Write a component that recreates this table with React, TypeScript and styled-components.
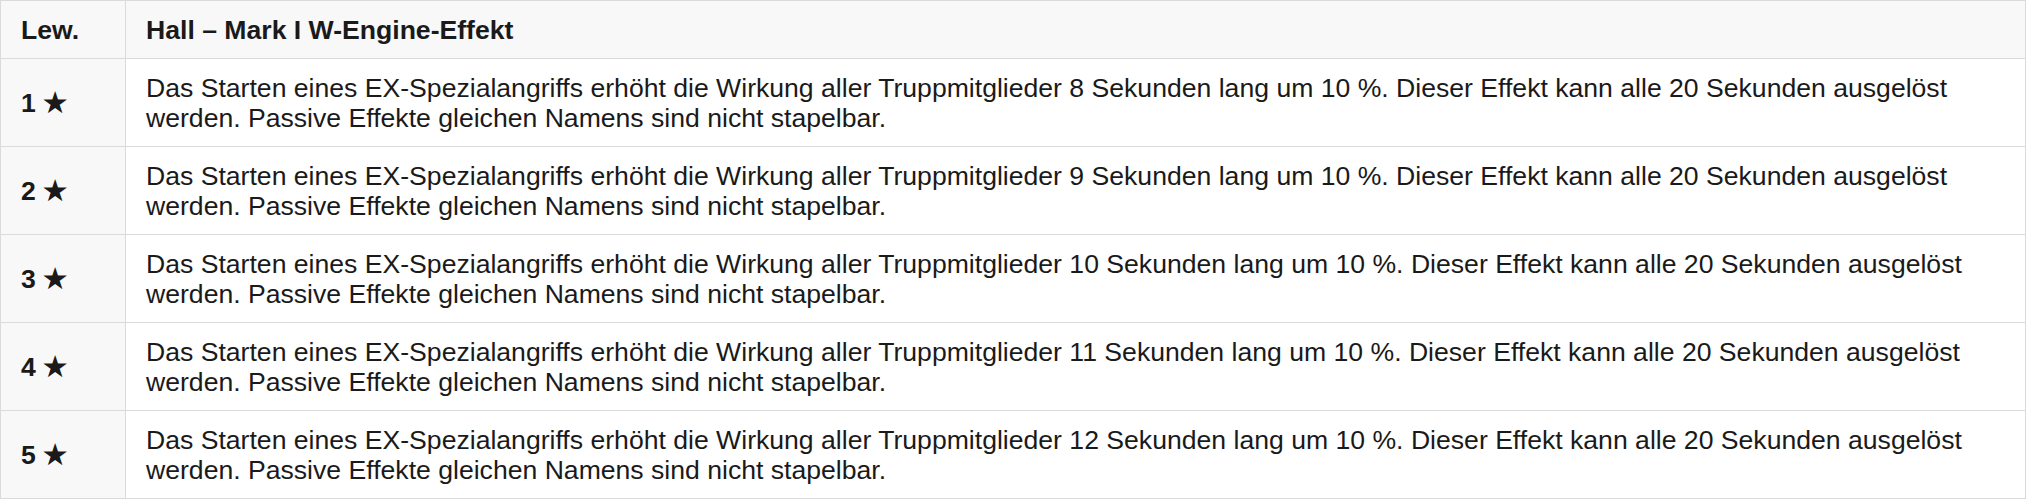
import React from "react";
import styled, { createGlobalStyle } from "styled-components";

const GlobalStyle = createGlobalStyle`
  html, body {
    margin: 0;
    padding: 0;
    background: #ffffff;
  }
  body {
    font-family: "Liberation Sans", Arial, sans-serif;
    color: #1a1a1a;
  }
`;

const Table = styled.table`
  width: 2026px;
  border-collapse: collapse;
  font-family: "Liberation Sans", Arial, sans-serif;
  font-size: 26.6px;
  line-height: 30px;
`;

const HeadCell = styled.th<{ $narrow?: boolean }>`
  background: #f8f8f8;
  border: 1px solid #dadada;
  padding: 14px 20px 13px;
  text-align: left;
  font-weight: bold;
  width: ${(p) => (p.$narrow ? "84px" : "auto")};
`;

const LevelCell = styled.td`
  background: #f8f8f8;
  border: 1px solid #dadada;
  padding: 14px 20px 13px;
  font-weight: bold;
  white-space: nowrap;
`;

const TextCell = styled.td`
  background: #ffffff;
  border: 1px solid #dadada;
  padding: 14px 20px 13px;
`;

const durations = [8, 9, 10, 11, 12];

const App: React.FC = () => {
  return (
    <>
      <GlobalStyle />
      <Table>
        <thead>
          <tr>
            <HeadCell $narrow>Lew.</HeadCell>
            <HeadCell>Hall – Mark I W-Engine-Effekt</HeadCell>
          </tr>
        </thead>
        <tbody>
          {durations.map((secs, i) => (
            <tr key={secs}>
              <LevelCell>{i + 1} ★</LevelCell>
              <TextCell>
                Das Starten eines EX-Spezialangriffs erhöht die Wirkung aller
                Truppmitglieder {secs} Sekunden lang um 10 %. Dieser Effekt kann
                alle 20 Sekunden ausgelöst werden. Passive Effekte gleichen
                Namens sind nicht stapelbar.
              </TextCell>
            </tr>
          ))}
        </tbody>
      </Table>
    </>
  );
};

export default App;
